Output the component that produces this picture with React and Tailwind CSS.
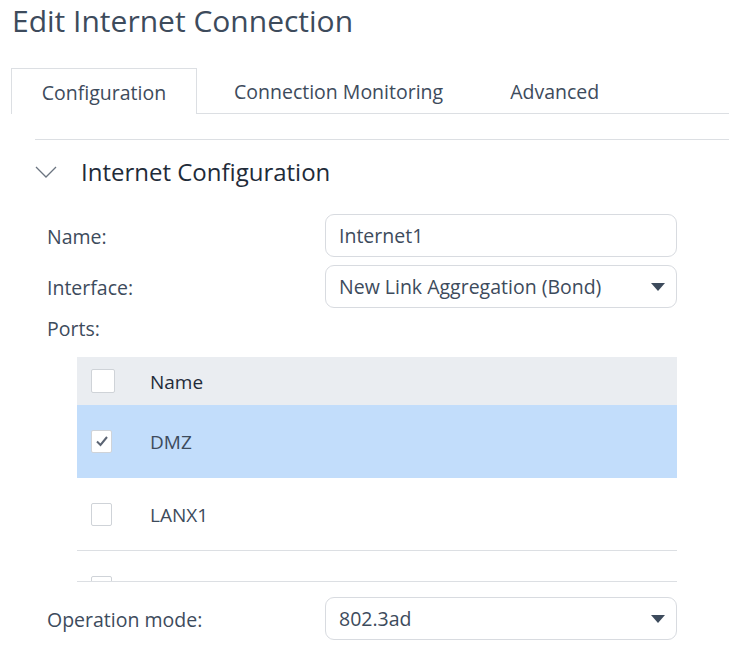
import React from "react";

const font = { fontFamily: '"Open Sans", "Noto Sans", sans-serif' };

const ports = [
  { name: "DMZ", checked: true },
  { name: "LANX1", checked: false },
  { name: "", checked: false },
];

const Checkbox = ({ checked, big }) => (
  <span
    className={`flex items-center justify-center bg-white border border-[#cfd3d8] rounded-[2px] ${
      big ? "w-[24px] h-[24px]" : "w-[21px] h-[23px]"
    }`}
  >
    {checked && (
      <svg width="14" height="12" viewBox="0 0 14 12" fill="none">
        <path d="M2 6.5 L5.5 10 L12 2" stroke="#5b6473" strokeWidth="2" />
      </svg>
    )}
  </span>
);

const Caret = () => (
  <svg width="14" height="8" viewBox="0 0 14 8">
    <path d="M0 0 H14 L7 8 Z" fill="#3d4b5c" />
  </svg>
);

const FormRow = ({ label, children }) => (
  <div className="flex items-center h-[43px]">
    <div className="w-[278px] pt-[2px] text-[19.5px] text-[#3d4b5c]">{label}</div>
    {children}
  </div>
);

const Field = ({ value, select }) => (
  <div className="w-[352px] h-[43px] border border-[#d8dbe0] rounded-[9px] flex items-center justify-between pl-[13px] pr-[11px] text-[19.5px] text-[#3d4b5c]">
    <span className="pt-[1px]">{value}</span>
    {select && <Caret />}
  </div>
);

export default function App() {
  return (
    <div className="w-[729px] h-[661px] bg-white overflow-hidden" style={font}>
      <h1 className="pl-[12px] text-[30px] leading-[42px] text-[#3d4b5c]">
        Edit Internet Connection
      </h1>

      {/* tabs */}
      <div className="flex mt-[26px] h-[46px] text-[19.5px] text-[#3d4b5c]">
        <div className="w-[11px]" />
        <div className="w-[186px] pt-[2px] border border-b-0 border-[#dcdfe3] flex items-center justify-center">
          Configuration
        </div>
        <div className="flex-1 pt-[2px] flex items-center border-b border-[#dcdfe3]">
          <span className="ml-[37px]">Connection Monitoring</span>
          <span className="ml-[67px]">Advanced</span>
        </div>
      </div>

      <div className="ml-[35px] mt-[25px] border-t border-[#dcdfe3]">
        {/* section header */}
        <div className="flex items-center h-[64px]">
          <svg width="22" height="12" viewBox="0 0 22 12" fill="none">
            <path d="M1 1 L11 11 L21 1" stroke="#6b7480" strokeWidth="1.3" />
          </svg>
          <span className="ml-[24px] text-[24px] text-[#1f2b39]">
            Internet Configuration
          </span>
        </div>

        <div className="pl-[12px] mt-[10px] flex flex-col gap-[8px]">
          <FormRow label="Name:">
            <Field value="Internet1" />
          </FormRow>
          <FormRow label="Interface:">
            <Field value="New Link Aggregation (Bond)" select />
          </FormRow>
        </div>
        <div className="pl-[12px] mt-[8px] pt-[2px] h-[24px] flex items-center text-[19.5px] text-[#3d4b5c]">
          Ports:
        </div>

        {/* ports table */}
        <div className="ml-[42px] mt-[17px] w-[600px] h-[225px] overflow-hidden border-b border-[#dcdfe3]">
          <div className="h-[48px] bg-[#eaedf1] flex items-center pl-[14px]">
            <Checkbox big />
            <span className="ml-[35px] pt-[2px] text-[19px] text-[#1f2b39]">Name</span>
          </div>
          {ports.map((p, i) => (
            <div
              key={i}
              className={`h-[73px] flex items-center pl-[14px] border-b ${
                p.checked
                  ? "bg-[#c2ddfb] border-[#c2ddfb]"
                  : "bg-white border-[#dcdfe3]"
              }`}
            >
              <Checkbox checked={p.checked} />
              {p.name && (
                <span className="ml-[38px] pt-[2px] text-[19px] text-[#3d4b5c]">
                  {p.name}
                </span>
              )}
            </div>
          ))}
        </div>

        <div className="pl-[12px] mt-[15px]">
          <FormRow label="Operation mode:">
            <Field value="802.3ad" select />
          </FormRow>
        </div>
      </div>
    </div>
  );
}
